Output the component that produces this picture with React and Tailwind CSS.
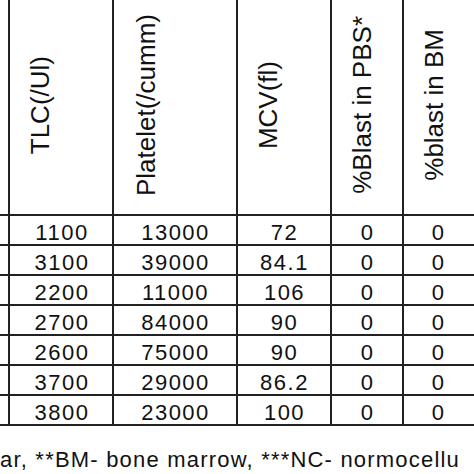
import React from "react";

const rows = [
  ["1100", "13000", "72", "0", "0"],
  ["3100", "39000", "84.1", "0", "0"],
  ["2200", "11000", "106", "0", "0"],
  ["2700", "84000", "90", "0", "0"],
  ["2600", "75000", "90", "0", "0"],
  ["3700", "29000", "86.2", "0", "0"],
  ["3800", "23000", "100", "0", "0"],
];

function Head({ children, cls }) {
  return (
    <div className={"h-full flex items-center pb-[4px] " + cls}>
      <span className="[writing-mode:vertical-rl] rotate-180 leading-none text-[26px] whitespace-nowrap">
        {children}
      </span>
    </div>
  );
}

export default function App() {
  return (
    <div className="w-[474px] h-[474px] overflow-hidden bg-white text-[#111] font-['Liberation_Sans',Arial,sans-serif]">
      <div className="w-[520px]">
        <div className="flex h-[216px] border-b-2 border-[#222]">
          <div className="w-[10px] h-full border-r-2 border-[#222]" />
          <Head cls="w-[104px] border-r-2 border-[#222] pl-[17px]">TLC(/Ul)</Head>
          <Head cls="w-[124px] border-r-2 border-[#222] pl-[19px]">Platelet(/cumm)</Head>
          <Head cls="w-[94px] border-r-2 border-[#222] pl-[17px]">MCV(fl)</Head>
          <Head cls="w-[72px] border-r-2 border-[#222] pl-[17px]">%Blast in PBS*</Head>
          <Head cls="w-[80px] pl-[17px]">%blast in BM</Head>
        </div>
        {rows.map((r, i) => (
          <div key={i} className="flex h-[30px] border-b-2 border-[#222] text-[22px] tracking-[1.5px] leading-[34px]">
            <div className="w-[10px] h-full border-r-2 border-[#222]" />
            <div className="w-[104px] h-full border-r-2 border-[#222] text-center pl-[2px]">{r[0]}</div>
            <div className="w-[124px] h-full border-r-2 border-[#222] text-center pl-[1px]">{r[1]}</div>
            <div className="w-[94px] h-full border-r-2 border-[#222] text-center pl-[1px]">{r[2]}</div>
            <div className="w-[72px] h-full border-r-2 border-[#222] text-center pl-[1px]">{r[3]}</div>
            <div className="w-[68px] h-full text-center pl-[1px]">{r[4]}</div>
          </div>
        ))}
      </div>
      <div className="mt-[20px] text-[22px] leading-[28px] tracking-[1.2px] whitespace-nowrap">
        ar, **BM- bone marrow, ***NC- normocellu
      </div>
    </div>
  );
}
